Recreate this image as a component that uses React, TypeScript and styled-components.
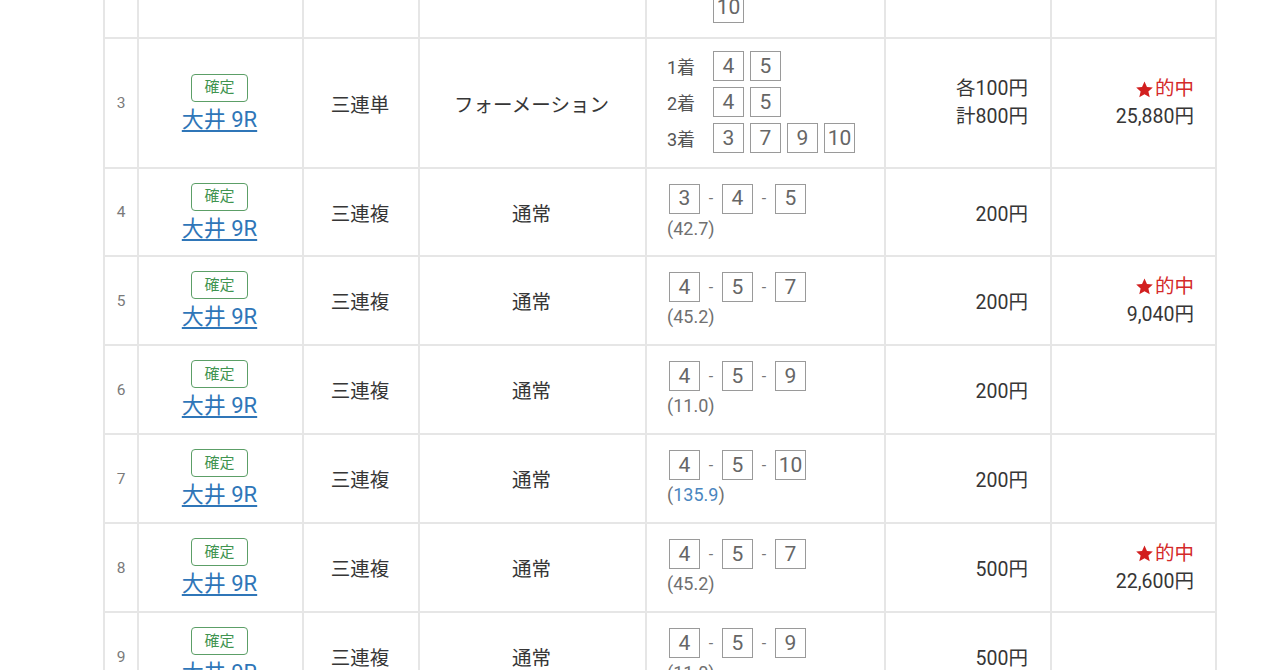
import React from "react";
import styled, { createGlobalStyle } from "styled-components";

const Global = createGlobalStyle`
  html, body { margin: 0; padding: 0; background: #fff; overflow: hidden; }
  body { font-family: Roboto, "Noto Sans CJK JP", "Noto Sans", sans-serif; color: #333; }
`;

const Page = styled.div`
  height: 670px;
  overflow: hidden;
`;

const Table = styled.table`
  margin: -130px 0 0 103px;
  width: 1112px;
  border-collapse: collapse;
  table-layout: fixed;
`;

const Td = styled.td<{ $align?: "left" | "center" | "right" }>`
  border: 2px solid #e6e6e6;
  text-align: ${(p) => p.$align || "center"};
  vertical-align: middle;
  padding: 0 22px 0 20px;
  font-size: 19.5px;
  color: #363636;
`;

const Row = styled.tr<{ $h: number }>`
  height: ${(p) => p.$h}px;
`;

const NoCell = styled(Td)`
  padding: 0;
  font-size: 15.5px;
  color: #7a7a7a;
`;

const BetCell = styled(Td)`
  padding: 12px 0 14px 20px;
`;

const ResultCell = styled(Td)`
  padding-right: 21px;
`;

const RaceWrap = styled.div`
  display: flex;
  flex-direction: column;
  align-items: center;
  gap: 5px;
`;

const Badge = styled.span`
  display: inline-flex;
  align-items: center;
  justify-content: center;
  box-sizing: border-box;
  width: 57px;
  height: 28px;
  border: 1.5px solid #5c9f67;
  border-radius: 4px;
  color: #3f9450;
  font-size: 15px;
  line-height: 1;
`;

const RaceLink = styled.a`
  color: #2f76b8;
  font-size: 22px;
  line-height: 26px;
  text-decoration: underline;
  text-underline-offset: 3px;
  text-decoration-thickness: 1.5px;
`;

const Lines = styled.div`
  display: flex;
  flex-direction: column;
  gap: 6px;
`;

const Line = styled.div`
  display: flex;
  align-items: center;
`;

const ComboLine = styled(Line)`
  padding-left: 2px;
`;

const Label = styled.span`
  width: 46px;
  flex: none;
  font-size: 18px;
  color: #555;
`;

const Boxes = styled.div`
  display: flex;
  gap: 6px;
`;

const NumBox = styled.span`
  display: inline-flex;
  align-items: center;
  justify-content: center;
  box-sizing: border-box;
  min-width: 31px;
  height: 30px;
  padding: 0 2px;
  border: 1.5px solid #9a9a9a;
  color: #666;
  font-size: 21px;
  line-height: 1;
`;

const Dash = styled.span`
  width: 22px;
  text-align: center;
  color: #777;
  font-size: 16px;
`;

const Odds = styled.div`
  margin-top: 4px;
  font-size: 18px;
  color: #707070;
  line-height: 21px;
`;

const OddsVal = styled.span<{ $blue?: boolean }>`
  color: ${(p) => (p.$blue ? "#4a86c0" : "#707070")};
`;

const Stack = styled.div`
  display: flex;
  flex-direction: column;
  align-items: flex-end;
  line-height: 28px;
  font-size: 19.5px;
`;

const Hit = styled.span`
  color: #d42a2a;
  display: inline-flex;
  align-items: center;
`;

const Star = styled.svg`
  width: 19px;
  height: 19px;
  margin-right: 1px;
  fill: #d21f1f;
`;

type Combo = { nums: string[]; odds: string; blue?: boolean };
type RowData = {
  no: number;
  h: number;
  combo: Combo;
  amount: string;
  hit?: string;
};

const rows: RowData[] = [
  { no: 4, h: 88, combo: { nums: ["3", "4", "5"], odds: "42.7" }, amount: "200円" },
  { no: 5, h: 89, combo: { nums: ["4", "5", "7"], odds: "45.2" }, amount: "200円", hit: "9,040円" },
  { no: 6, h: 89, combo: { nums: ["4", "5", "9"], odds: "11.0" }, amount: "200円" },
  { no: 7, h: 89, combo: { nums: ["4", "5", "10"], odds: "135.9", blue: true }, amount: "200円" },
  { no: 8, h: 89, combo: { nums: ["4", "5", "7"], odds: "45.2" }, amount: "500円", hit: "22,600円" },
  { no: 9, h: 89, combo: { nums: ["4", "5", "9"], odds: "11.0" }, amount: "500円" },
];

const Race = () => (
  <RaceWrap>
    <Badge>確定</Badge>
    <RaceLink href="#">大井 9R</RaceLink>
  </RaceWrap>
);

const HitMark = ({ value }: { value: string }) => (
  <Stack>
    <Hit>
      <Star viewBox="0 0 24 24">
        <path d="M12 1.8l3.1 6.9 7.4.7-5.6 5 1.7 7.3L12 17.9l-6.6 3.8 1.7-7.3-5.6-5 7.4-.7z" />
      </Star>
      的中
    </Hit>
    <span>{value}</span>
  </Stack>
);

const Formation = ({ lines }: { lines: { label: string; nums: string[] }[] }) => (
  <Lines>
    {lines.map((l, i) => (
      <Line key={i}>
        <Label>{l.label}</Label>
        <Boxes>
          {l.nums.map((n, j) => (
            <NumBox key={j}>{n}</NumBox>
          ))}
        </Boxes>
      </Line>
    ))}
  </Lines>
);

export default function App() {
  return (
    <Page>
      <Global />
      <Table>
        <colgroup>
          <col style={{ width: 34 }} />
          <col style={{ width: 165 }} />
          <col style={{ width: 116 }} />
          <col style={{ width: 227 }} />
          <col style={{ width: 239 }} />
          <col style={{ width: 166 }} />
          <col style={{ width: 165 }} />
        </colgroup>
        <tbody>
          <Row $h={167}>
            <NoCell>2</NoCell>
            <Td>
              <Race />
            </Td>
            <Td>三連単</Td>
            <Td>フォーメーション</Td>
            <BetCell $align="left">
              <Formation
                lines={[
                  { label: "1着", nums: ["4", "5"] },
                  { label: "2着", nums: ["4", "5"] },
                  { label: "3着", nums: ["1", "2", "3", "6"] },
                  { label: "", nums: ["10"] },
                ]}
              />
            </BetCell>
            <Td $align="right">
              <Stack>
                <span>各100円</span>
                <span>計1,200円</span>
              </Stack>
            </Td>
            <ResultCell $align="right" />
          </Row>
          <Row $h={130}>
            <NoCell>3</NoCell>
            <Td>
              <Race />
            </Td>
            <Td>三連単</Td>
            <Td>フォーメーション</Td>
            <BetCell $align="left">
              <Formation
                lines={[
                  { label: "1着", nums: ["4", "5"] },
                  { label: "2着", nums: ["4", "5"] },
                  { label: "3着", nums: ["3", "7", "9", "10"] },
                ]}
              />
            </BetCell>
            <Td $align="right">
              <Stack>
                <span>各100円</span>
                <span>計800円</span>
              </Stack>
            </Td>
            <ResultCell $align="right">
              <HitMark value="25,880円" />
            </ResultCell>
          </Row>
          {rows.map((r) => (
            <Row $h={r.h} key={r.no}>
              <NoCell>{r.no}</NoCell>
              <Td>
                <Race />
              </Td>
              <Td>三連複</Td>
              <Td>通常</Td>
              <BetCell $align="left">
                <ComboLine>
                  {r.combo.nums.map((n, i) => (
                    <React.Fragment key={i}>
                      {i > 0 && <Dash>-</Dash>}
                      <NumBox>{n}</NumBox>
                    </React.Fragment>
                  ))}
                </ComboLine>
                <Odds>
                  (<OddsVal $blue={r.combo.blue}>{r.combo.odds}</OddsVal>)
                </Odds>
              </BetCell>
              <Td $align="right">{r.amount}</Td>
              <ResultCell $align="right">{r.hit ? <HitMark value={r.hit} /> : null}</ResultCell>
            </Row>
          ))}
        </tbody>
      </Table>
    </Page>
  );
}
